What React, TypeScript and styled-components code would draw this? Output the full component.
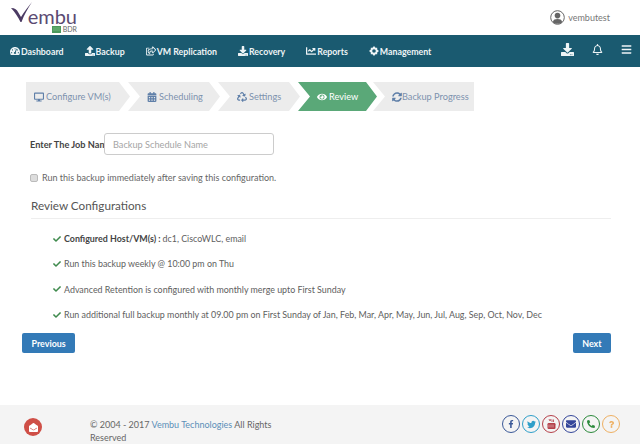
import styled, { createGlobalStyle } from "styled-components";
import {
  FaTachometerAlt,
  FaUpload,
  FaDownload,
  FaChartLine,
  FaDesktop,
  FaCalendarAlt,
  FaRecycle,
  FaEye,
  FaSyncAlt,
  FaCheck,
  FaBars,
  FaRegBell,
  FaFacebookF,
  FaTwitter,
  FaEnvelope,
  FaPhoneAlt,
  FaQuestion,
  FaRegShareSquare,
  FaEnvelopeOpen,
} from "react-icons/fa";

const GlobalStyle = createGlobalStyle`
  html, body {
    margin: 0;
    padding: 0;
    background: #fff;
    font-family: Lato, "Open Sans", sans-serif;
    color: #555;
  }
  * { box-sizing: border-box; }
`;

const Page = styled.div`
  width: 640px;
  height: 444px;
  overflow: hidden;
  display: flex;
  flex-direction: column;
`;

const Header = styled.header`
  height: 35px;
  display: flex;
  justify-content: space-between;
  padding: 1px 30px 0 12px;
`;

const Logo = styled.div`
  display: flex;
  flex-direction: column;
  align-items: flex-end;
  width: 65px;
`;

const LogoRow = styled.div`
  display: flex;
  align-items: flex-start;
  height: 24px;
`;

const LogoText = styled.span`
  font-size: 20px;
  line-height: 18px;
  margin: 6px 0 0 -5px;
  color: #5b4a72;
`;

const LogoSub = styled.div`
  display: flex;
  align-items: center;
  gap: 2px;
  font-size: 7px;
  line-height: 9px;
  color: #666;
`;

const SubIcon = styled.span`
  width: 9px;
  height: 7px;
  background: #5da86b;
  border: 1px solid #4c9a5c;
  border-bottom-width: 2px;
  display: block;
`;

const UserBox = styled.div`
  display: flex;
  align-items: center;
  gap: 3px;
  height: 32px;
  font-size: 9px;
  color: #777;
`;

const Nav = styled.nav`
  height: 32px;
  background: #1a5a70;
  display: flex;
  align-items: center;
  padding: 0 8px 0 10px;
  color: #eef4f6;
  font-size: 8.8px;
  font-weight: 700;
`;

const NavItem = styled.div`
  display: flex;
  align-items: center;
  gap: 1px;
  margin-right: 21px;
  svg {
    width: 10px;
    height: 10px;
  }
`;

const NavRight = styled.div`
  margin-left: auto;
  display: flex;
  align-items: center;
  gap: 18px;
  margin-top: -4px;
  svg {
    font-size: 11px;
  }
`;

const Content = styled.main`
  flex: 1;
  padding: 15px 29px 0 22px;
`;

const Steps = styled.div`
  display: flex;
  margin-left: 4px;
  height: 29px;
`;

const Step = styled.div<{ $active?: boolean; $first?: boolean; $last?: boolean; $width: number }>`
  flex: none;
  width: ${(p) => p.$width}px;
  height: 29px;
  margin-right: ${(p) => (p.$active ? -4 : -2)}px;
  display: flex;
  align-items: center;
  gap: ${(p) => (p.$last ? 0 : 2)}px;
  white-space: nowrap;
  font-size: 9.2px;
  padding-left: ${(p) => (p.$first ? 8 : 19)}px;
  background: ${(p) => (p.$active ? "#5aa878" : "#ececec")};
  color: ${(p) => (p.$active ? "#fff" : "#7d92ae")};
  clip-path: ${(p) =>
    p.$last
      ? "polygon(0 0, 100% 0, 100% 100%, 0 100%, 12px 50%)"
      : p.$first
      ? "polygon(0 0, calc(100% - 11px) 0, 100% 50%, calc(100% - 11px) 100%, 0 100%)"
      : "polygon(0 0, calc(100% - 11px) 0, 100% 50%, calc(100% - 11px) 100%, 0 100%, 12px 50%)"};
  svg {
    font-size: 10px;
    color: ${(p) => (p.$active ? "#fff" : "#5f7fa8")};
  }
`;

const JobRow = styled.div`
  display: flex;
  align-items: center;
  margin: 22px 0 0 8px;
`;

const JobLabel = styled.label`
  width: 74px;
  overflow: hidden;
  white-space: nowrap;
  font-size: 9.2px;
  font-weight: 700;
  color: #444;
`;

const JobInput = styled.input`
  width: 170px;
  height: 22px;
  border: 1px solid #ccc;
  border-radius: 3px;
  padding: 0 8px;
  font: 9.2px Lato, sans-serif;
  background: #fff;
  &::placeholder {
    color: #a5a5a5;
  }
`;

const CheckRow = styled.div`
  display: flex;
  align-items: center;
  gap: 4px;
  margin: 17px 0 0 8px;
  font-size: 9px;
  color: #666;
`;

const CheckBox = styled.span`
  width: 8px;
  height: 8px;
  border: 1px solid #bbb;
  border-radius: 2px;
  background: #ddd;
`;

const Title = styled.h3`
  margin: 13px 0 0 9px;
  padding-bottom: 4px;
  font-size: 11.7px;
  line-height: 18px;
  font-weight: 400;
  color: #555;
  border-bottom: 1px solid #eee;
`;

const ReviewList = styled.ul`
  list-style: none;
  margin: 7px 0 0 30px;
  padding: 0;
`;

const ReviewItem = styled.li`
  display: flex;
  align-items: center;
  gap: 2px;
  height: 25.3px;
  font-size: 8.9px;
  color: #5e5e5e;
  white-space: nowrap;
  svg {
    color: #3f8a4d;
    font-size: 8px;
    margin: 0 1px 0 1px;
  }
  b {
    color: #444;
  }
`;

const Buttons = styled.div`
  display: flex;
  justify-content: space-between;
  margin-top: 6px;
`;

const Button = styled.button`
  height: 20px;
  padding: 0 9.5px;
  border: 0;
  border-radius: 2px;
  background: #337ab7;
  color: #fff;
  font: 700 8.9px Lato, sans-serif;
`;

const Footer = styled.footer`
  height: 39px;
  background: #f4f4f4;
  display: flex;
  padding: 10px 20px 0 24px;
`;

const HomeBadge = styled.span`
  width: 18px;
  height: 18px;
  margin-top: 3px;
  border-radius: 50%;
  background: #cf4f47;
  color: #fff;
  display: flex;
  align-items: center;
  justify-content: center;
  font-size: 9px;
`;

const Copy = styled.div`
  width: 190px;
  margin: 3px 0 0 48px;
  font-size: 9px;
  line-height: 13px;
  color: #666;
  a {
    color: #5b8fb8;
    text-decoration: none;
  }
`;

const Socials = styled.div`
  margin-left: auto;
  display: flex;
  gap: 2px;
  height: 18px;
`;

const Social = styled.span<{ $color: string; $size?: number }>`
  width: 18px;
  height: 18px;
  border-radius: 50%;
  border: 1.3px solid ${(p) => p.$color};
  color: ${(p) => p.$color};
  display: flex;
  align-items: center;
  justify-content: center;
  font-size: ${(p) => p.$size ?? 8}px;
`;

const UserIcon = () => (
  <svg width="15" height="15" viewBox="0 0 15 15">
    <circle cx="7.5" cy="7.5" r="6.8" fill="none" stroke="#666" strokeWidth="1" />
    <circle cx="7.5" cy="5.6" r="2.8" fill="#666" />
    <path d="M2.8 12.2 C3.4 9.6 5 9 7.5 9 C10 9 11.6 9.6 12.2 12.2 C10 14.2 5 14.2 2.8 12.2 Z" fill="#666" />
  </svg>
);

const ManagementIcon = () => (
  <svg viewBox="0 0 10 10">
    <path
      fillRule="evenodd"
      fill="currentColor"
      d="M5 0 L6.5 1.8 L8.2 1.8 L8.2 3.5 L10 5 L8.2 6.5 L8.2 8.2 L6.5 8.2 L5 10 L3.5 8.2 L1.8 8.2 L1.8 6.5 L0 5 L1.8 3.5 L1.8 1.8 L3.5 1.8 Z M5 3.2 A1.8 1.8 0 1 0 5 6.8 A1.8 1.8 0 1 0 5 3.2 Z"
    />
  </svg>
);

const TubeIcon = () => (
  <svg width="9" height="10" viewBox="0 0 9 10">
    <path d="M2 0 L3 2 L4 0 M5 0.5 L5 3 M6.5 0.5 L6.5 3" fill="none" stroke="currentColor" strokeWidth="0.8" />
    <rect x="0.5" y="4" width="8" height="6" rx="1.2" fill="currentColor" />
    <path d="M2 5.5 L2 8.5 M4 5.5 L4 8.5 M6 5.5 L6 8.5" stroke="#f4f4f4" strokeWidth="0.5" />
  </svg>
);

const navItems = [
  { icon: <FaTachometerAlt />, label: "Dashboard" },
  { icon: <FaUpload />, label: "Backup" },
  { icon: <FaRegShareSquare />, label: "VM Replication" },
  { icon: <FaDownload />, label: "Recovery" },
  { icon: <FaChartLine />, label: "Reports" },
  { icon: <ManagementIcon />, label: "Management" },
];

const steps = [
  { icon: <FaDesktop />, label: "Configure VM(s)", width: 104 },
  { icon: <FaCalendarAlt />, label: "Scheduling", width: 92 },
  { icon: <FaRecycle />, label: "Settings", width: 82 },
  { icon: <FaEye />, label: "Review", width: 79 },
  { icon: <FaSyncAlt />, label: "Backup Progress", width: 101 },
];

const socials = [
  { icon: <FaFacebookF />, color: "#3b5998" },
  { icon: <FaTwitter />, color: "#2f9fc9", size: 9 },
  { icon: <TubeIcon />, color: "#b5404a" },
  { icon: <FaEnvelope />, color: "#35479a", size: 10 },
  { icon: <FaPhoneAlt />, color: "#2c8a3c" },
  { icon: <FaQuestion />, color: "#eeb063", size: 7 },
];

export default function App() {
  return (
    <Page>
      <GlobalStyle />
      <Header>
        <Logo>
          <LogoRow>
            <svg width="22" height="22" viewBox="0 0 22 22">
              <path
                d="M0 7 C4 7 6 9 7 11 L10 16 C13 11 17 6 21 1 C17 7 13 14 10.5 21 L9.5 21 C7 16 4 11 0 7 Z"
                fill="#4b3a63"
              />
            </svg>
            <LogoText>embu</LogoText>
          </LogoRow>
          <LogoSub>
            <SubIcon />
            BDR
          </LogoSub>
        </Logo>
        <UserBox>
          <UserIcon />
          vembutest
        </UserBox>
      </Header>
      <Nav>
        {navItems.map((n) => (
          <NavItem key={n.label}>
            {n.icon}
            {n.label}
          </NavItem>
        ))}
        <NavRight>
          <FaDownload style={{ fontSize: 13 }} />
          <FaRegBell />
          <FaBars />
        </NavRight>
      </Nav>
      <Content>
        <Steps>
          {steps.map((s, i) => (
            <Step
              key={s.label}
              $width={s.width}
              $first={i === 0}
              $last={i === steps.length - 1}
              $active={s.label === "Review"}
            >
              {s.icon}
              {s.label}
            </Step>
          ))}
        </Steps>
        <JobRow>
          <JobLabel>Enter The Job Name</JobLabel>
          <JobInput placeholder="Backup Schedule Name" />
        </JobRow>
        <CheckRow>
          <CheckBox />
          Run this backup immediately after saving this configuration.
        </CheckRow>
        <Title>Review Configurations</Title>
        <ReviewList>
          <ReviewItem>
            <FaCheck />
            <b>Configured Host/VM(s) :</b> dc1, CiscoWLC, email
          </ReviewItem>
          <ReviewItem>
            <FaCheck />
            Run this backup weekly @ 10:00 pm on Thu
          </ReviewItem>
          <ReviewItem>
            <FaCheck />
            Advanced Retention is configured with monthly merge upto First Sunday
          </ReviewItem>
          <ReviewItem>
            <FaCheck />
            Run additional full backup monthly at 09.00 pm on First Sunday of Jan, Feb, Mar, Apr, May, Jun, Jul, Aug, Sep, Oct, Nov, Dec
          </ReviewItem>
        </ReviewList>
        <Buttons>
          <Button>Previous</Button>
          <Button>Next</Button>
        </Buttons>
      </Content>
      <Footer>
        <HomeBadge>
          <FaEnvelopeOpen />
        </HomeBadge>
        <Copy>
          © 2004 - 2017 <a href="#">Vembu Technologies</a> All Rights Reserved
        </Copy>
        <Socials>
          {socials.map((s, i) => (
            <Social key={i} $color={s.color} $size={s.size}>
              {s.icon}
            </Social>
          ))}
        </Socials>
      </Footer>
    </Page>
  );
}
